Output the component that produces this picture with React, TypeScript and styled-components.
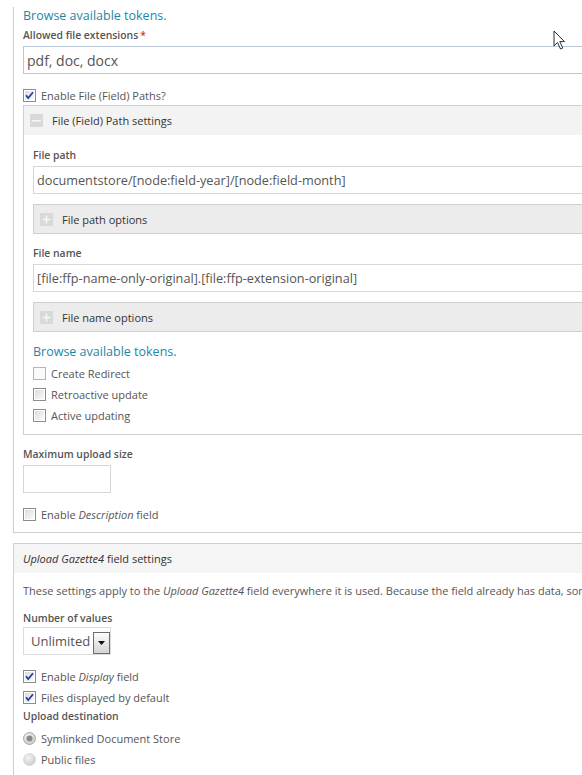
import React from "react";
import styled, { createGlobalStyle } from "styled-components";

const GlobalStyle = createGlobalStyle`
  html, body {
    margin: 0;
    padding: 0;
    background: #ffffff;
    overflow: hidden;
  }
  body {
    font-family: "Open Sans", "DejaVu Sans", sans-serif;
    color: #555;
  }
`;

const Page = styled.div`
  position: relative;
  width: 582px;
  height: 775px;
  overflow: hidden;
  padding-left: 13px;
  box-sizing: border-box;
`;

const Fieldset = styled.div<{ top?: boolean }>`
  width: 900px;
  border-left: 1px solid #cfcfcf;
  border-bottom: 1px solid #cfcfcf;
  border-top: ${(p) => (p.top ? "1px solid #cfcfcf" : "none")};
  padding: 0 0 8px 9px;
  box-sizing: border-box;
`;

const InnerFieldset = styled.div`
  border-left: 1px solid #cfcfcf;
  border-bottom: 1px solid #cfcfcf;
  padding-bottom: 8px;
`;

const Legend = styled.div<{ bg?: string; flush?: boolean }>`
  display: flex;
  align-items: center;
  gap: 9px;
  height: 29px;
  border-top: ${(p) => (p.flush ? "none" : "1px solid #cfcfcf")};
  background: ${(p) => p.bg || "#f3f3f3"};
  padding-left: ${(p) => (p.flush ? 9 : 6)}px;
  margin-left: ${(p) => (p.flush ? "-9px" : "0")};
  font-size: 11px;
  color: #333;
`;

const Collapsed = styled.div`
  display: flex;
  align-items: center;
  gap: 9px;
  height: 28px;
  margin-top: 10px;
  border: 1px solid #cfcfcf;
  border-right: none;
  background: #ececec;
  padding-left: 6px;
  font-size: 11px;
  color: #333;
`;

const Toggle = styled.span`
  width: 13px;
  height: 13px;
  background: #d9d9d9;
  display: inline-flex;
  align-items: center;
  justify-content: center;
`;

const Body = styled.div`
  padding-left: 9px;
`;

const TokenLink = styled.a<{ mt?: number }>`
  display: block;
  margin-top: ${(p) => p.mt ?? 0}px;
  line-height: 18px;
  font-size: 12.5px;
  color: #1d87a6;
  text-decoration: none;
`;

const Label = styled.div<{ mt?: number }>`
  margin-top: ${(p) => p.mt ?? 0}px;
  line-height: 16px;
  font-size: 10.4px;
  font-weight: 600;
  color: #555;
`;

const Required = styled.span`
  color: #e0302b;
  margin-left: 2px;
`;

const TextInput = styled.div<{ w?: number; focus?: boolean; size?: number }>`
  margin-top: 3px;
  height: 28px;
  width: ${(p) => (p.w ? `${p.w}px` : "auto")};
  box-sizing: border-box;
  border: 1px solid ${(p) => (p.focus ? "#b9c8d8" : "#d6d6d6")};
  border-right: ${(p) => (p.w ? undefined : "none")};
  padding-left: 3px;
  display: flex;
  align-items: center;
  font-size: ${(p) => p.size ?? 12.7}px;
  color: #555;
  white-space: nowrap;
`;

const CheckRow = styled.div<{ mt?: number; h?: number }>`
  display: flex;
  align-items: center;
  gap: 5px;
  height: ${(p) => p.h ?? 21}px;
  margin-top: ${(p) => p.mt ?? 0}px;
  font-size: 11px;
  color: #555;
`;

const Description = styled.div`
  margin-top: 9px;
  line-height: 18px;
  font-size: 11px;
  color: #555;
  white-space: nowrap;
`;

const Select = styled.div`
  margin-top: 1px;
  width: 88px;
  height: 28px;
  box-sizing: border-box;
  border: 1px solid #dcdcdc;
  display: flex;
  align-items: center;
  justify-content: space-between;
  padding: 0 0 0 7px;
  font-size: 13px;
  color: #555;
`;

const SelectButton = styled.span`
  width: 15px;
  height: 20px;
  margin-top: 4px;
  border: 1px solid #6d6d6d;
  background: linear-gradient(#fdfdfd, #d4d4d4);
  display: inline-flex;
  align-items: center;
  justify-content: center;
`;

const Cursor = styled.svg`
  position: absolute;
  left: 553px;
  top: 30px;
`;

const Box = ({ checked, faint }: { checked?: boolean; faint?: boolean }) => (
  <svg width="13" height="13" viewBox="0 0 13 13">
    <defs>
      <linearGradient id="cbg" x1="0" y1="0" x2="1" y2="1">
        <stop offset="0" stopColor="#dcdcdc" />
        <stop offset="1" stopColor="#fbfbfb" />
      </linearGradient>
    </defs>
    <rect x="0.5" y="0.5" width="12" height="12" fill={faint ? "#fafafa" : "#fff"} stroke={faint ? "#b5b5b5" : "#8c8c8c"} />
    {!faint && <rect x="2" y="2" width="9" height="9" fill="url(#cbg)" />}
    {checked && (
      <path d="M3 6.2 L5.2 9 L10 3.2" fill="none" stroke="#22449a" strokeWidth="1.8" />
    )}
  </svg>
);

const Radio = ({ on }: { on?: boolean }) => (
  <svg width="13" height="13" viewBox="0 0 13 13">
    <defs>
      <radialGradient id="rg" cx="0.4" cy="0.35" r="0.7">
        <stop offset="0" stopColor="#f4f4f4" />
        <stop offset="1" stopColor="#c9c9c9" />
      </radialGradient>
    </defs>
    <circle cx="6.5" cy="6.5" r="6" fill="url(#rg)" stroke={on ? "#a8a8a8" : "#dadada"} />
    {on && <circle cx="6.5" cy="6.5" r="3" fill="#8a8a8a" />}
  </svg>
);

const Minus = () => (
  <Toggle>
    <svg width="9" height="9" viewBox="0 0 9 9">
      <rect x="0" y="4" width="9" height="1.5" fill="#f7f7f7" />
    </svg>
  </Toggle>
);

const Plus = () => (
  <Toggle>
    <svg width="9" height="9" viewBox="0 0 9 9">
      <rect x="0.5" y="3.75" width="8" height="1.5" fill="#f7f7f7" />
      <rect x="3.75" y="0.5" width="1.5" height="8" fill="#f7f7f7" />
    </svg>
  </Toggle>
);

export default function App() {
  return (
    <Page>
      <GlobalStyle />
      <Fieldset>
        <TokenLink mt={7}>Browse available tokens.</TokenLink>
        <Label mt={2}>
          Allowed file extensions<Required>*</Required>
        </Label>
        <TextInput focus size={14}>pdf, doc, docx</TextInput>
        <CheckRow mt={11} h={20}>
          <Box checked />
          Enable File (Field) Paths?
        </CheckRow>
        <InnerFieldset>
          <Legend>
            <Minus />
            File (Field) Path settings
          </Legend>
          <Body>
            <Label mt={12}>File path</Label>
            <TextInput>documentstore/[node:field-year]/[node:field-month]</TextInput>
            <Collapsed>
              <Plus />
              File path options
            </Collapsed>
            <Label mt={11}>File name</Label>
            <TextInput>[file:ffp-name-only-original].[file:ffp-extension-original]</TextInput>
            <Collapsed>
              <Plus />
              File name options
            </Collapsed>
            <TokenLink mt={11}>Browse available tokens.</TokenLink>
            <CheckRow mt={2}>
              <Box faint />
              Create Redirect
            </CheckRow>
            <CheckRow>
              <Box />
              Retroactive update
            </CheckRow>
            <CheckRow>
              <Box />
              Active updating
            </CheckRow>
          </Body>
        </InnerFieldset>
        <Label mt={11}>Maximum upload size</Label>
        <TextInput w={88} />
        <CheckRow mt={11} h={20}>
          <Box />
          <span>
            Enable <i>Description</i> field
          </span>
        </CheckRow>
      </Fieldset>

      <div style={{ height: 10 }} />

      <Fieldset top>
        <Legend bg="#f5f5f5" flush>
          <span>
            <i>Upload Gazette4</i> field settings
          </span>
        </Legend>
        <Description>
          These settings apply to the <i>Upload Gazette4</i> field everywhere it is used. Because the field already has data, some settings can no longer be changed.
        </Description>
        <Label mt={10}>Number of values</Label>
        <Select>
          Unlimited
          <SelectButton>
            <svg width="7" height="4" viewBox="0 0 7 4">
              <path d="M0 0 H7 L3.5 4 Z" fill="#111" />
            </svg>
          </SelectButton>
        </Select>
        <CheckRow mt={11}>
          <Box checked />
          <span>
            Enable <i>Display</i> field
          </span>
        </CheckRow>
        <CheckRow>
          <Box checked />
          Files displayed by default
        </CheckRow>
        <Label>Upload destination</Label>
        <CheckRow mt={4}>
          <Radio on />
          Symlinked Document Store
        </CheckRow>
        <CheckRow>
          <Radio />
          Public files
        </CheckRow>
      </Fieldset>

      <Cursor width="16" height="22" viewBox="0 0 16 22">
        <path d="M1 1 L1 16 L4.5 12.5 L7.5 19 L9.8 18 L6.8 11.6 L11.5 11.6 Z" fill="#fff" stroke="#2a2f3a" strokeWidth="1" strokeLinejoin="round" />
      </Cursor>
    </Page>
  );
}
